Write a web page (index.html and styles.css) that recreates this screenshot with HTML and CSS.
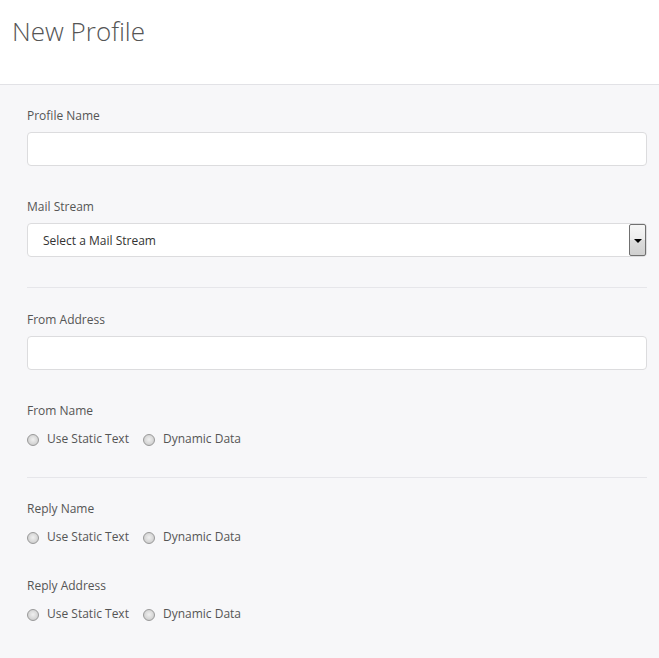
FILE: index.html
```html
<!DOCTYPE html>
<html lang="en">
<head>
<meta charset="utf-8">
<title>New Profile</title>
<link rel="stylesheet" href="styles.css">
</head>
<body>
<header class="page-header">
  <h1 class="page-title">New Profile</h1>
</header>
<main class="content">
  <section class="group">
    <div class="field">
      <label class="field-label">Profile Name</label>
      <div class="text-input"></div>
    </div>
    <div class="field">
      <label class="field-label">Mail Stream</label>
      <div class="select">
        <span class="select-value">Select a Mail Stream</span>
        <span class="select-button"><span class="select-arrow"></span></span>
      </div>
    </div>
  </section>
  <section class="group">
    <div class="field">
      <label class="field-label">From Address</label>
      <div class="text-input"></div>
    </div>
    <div class="field">
      <label class="field-label">From Name</label>
      <div class="radios">
        <label class="radio"><span class="radio-dot"></span>Use Static Text</label>
        <label class="radio"><span class="radio-dot"></span>Dynamic Data</label>
      </div>
    </div>
  </section>
  <section class="group group-last">
    <div class="field">
      <label class="field-label">Reply Name</label>
      <div class="radios">
        <label class="radio"><span class="radio-dot"></span>Use Static Text</label>
        <label class="radio"><span class="radio-dot"></span>Dynamic Data</label>
      </div>
    </div>
    <div class="field">
      <label class="field-label">Reply Address</label>
      <div class="radios">
        <label class="radio"><span class="radio-dot"></span>Use Static Text</label>
        <label class="radio"><span class="radio-dot"></span>Dynamic Data</label>
      </div>
    </div>
  </section>
</main>
</body>
</html>
```
FILE: styles.css
```css
* { box-sizing: border-box; }
html, body {
  margin: 0;
  padding: 0;
  background: #f7f7f9;
  font-family: "Open Sans", "Liberation Sans", sans-serif;
  color: #555;
  min-height: 100%;
}
.page-header {
  background: #fff;
  height: 85px;
  border-bottom: 1px solid #e2e2e6;
  padding: 13px 12px 0;
}
.page-title {
  margin: 0;
  font-size: 26px;
  font-weight: 300;
  line-height: 36px;
  color: #555;
}
.content {
  padding: 0 12px 0 27px;
}
.group {
  padding: 22px 0 30px;
}
.group + .group {
  border-top: 1px solid #e6e6ea;
  padding-top: 23px;
}
.group + .group.group-last {
  padding-top: 22px;
  padding-bottom: 40px;
}
.field + .field { margin-top: 32px; }
.field-label {
  display: block;
  font-size: 12px;
  line-height: 17px;
  margin-bottom: 8px;
  color: #555;
}
.text-input {
  height: 34px;
  background: #fff;
  border: 1px solid #dcdcde;
  border-radius: 4px;
}
.select {
  height: 34px;
  background: #fff;
  border: 1px solid #dcdcde;
  border-radius: 4px;
  display: flex;
  align-items: center;
  justify-content: space-between;
  padding: 0 0 0 15px;
}
.select-value {
  font-size: 12px;
  color: #333;
}
.select-button {
  width: 17px;
  height: 32px;
  border: 1px solid #707070;
  border-radius: 2px;
  background: linear-gradient(#f6f6f6 0%, #ececec 49%, #dcdcdc 50%, #d0d0d0 100%);
  display: flex;
  align-items: center;
  justify-content: center;
}
.select-arrow {
  width: 0;
  height: 0;
  border-left: 4px solid transparent;
  border-right: 4px solid transparent;
  border-top: 4px solid #000;
  margin-top: 1px;
}
.radios {
  display: flex;
  gap: 14px;
  font-size: 12px;
  line-height: 17px;
}
.field-label + .radios { margin-top: -8px; padding-top: 11px; }
.radio {
  display: flex;
  align-items: center;
  gap: 8px;
  color: #555;
}
.radio-dot {
  width: 12px;
  height: 12px;
  border-radius: 50%;
  border: 1px solid #999;
  background: radial-gradient(circle at 50% 45%, #f0f0f0 0%, #d8d8d8 55%, #c0c0c0 100%);
  margin-top: 3px;
  flex: none;
}
```
